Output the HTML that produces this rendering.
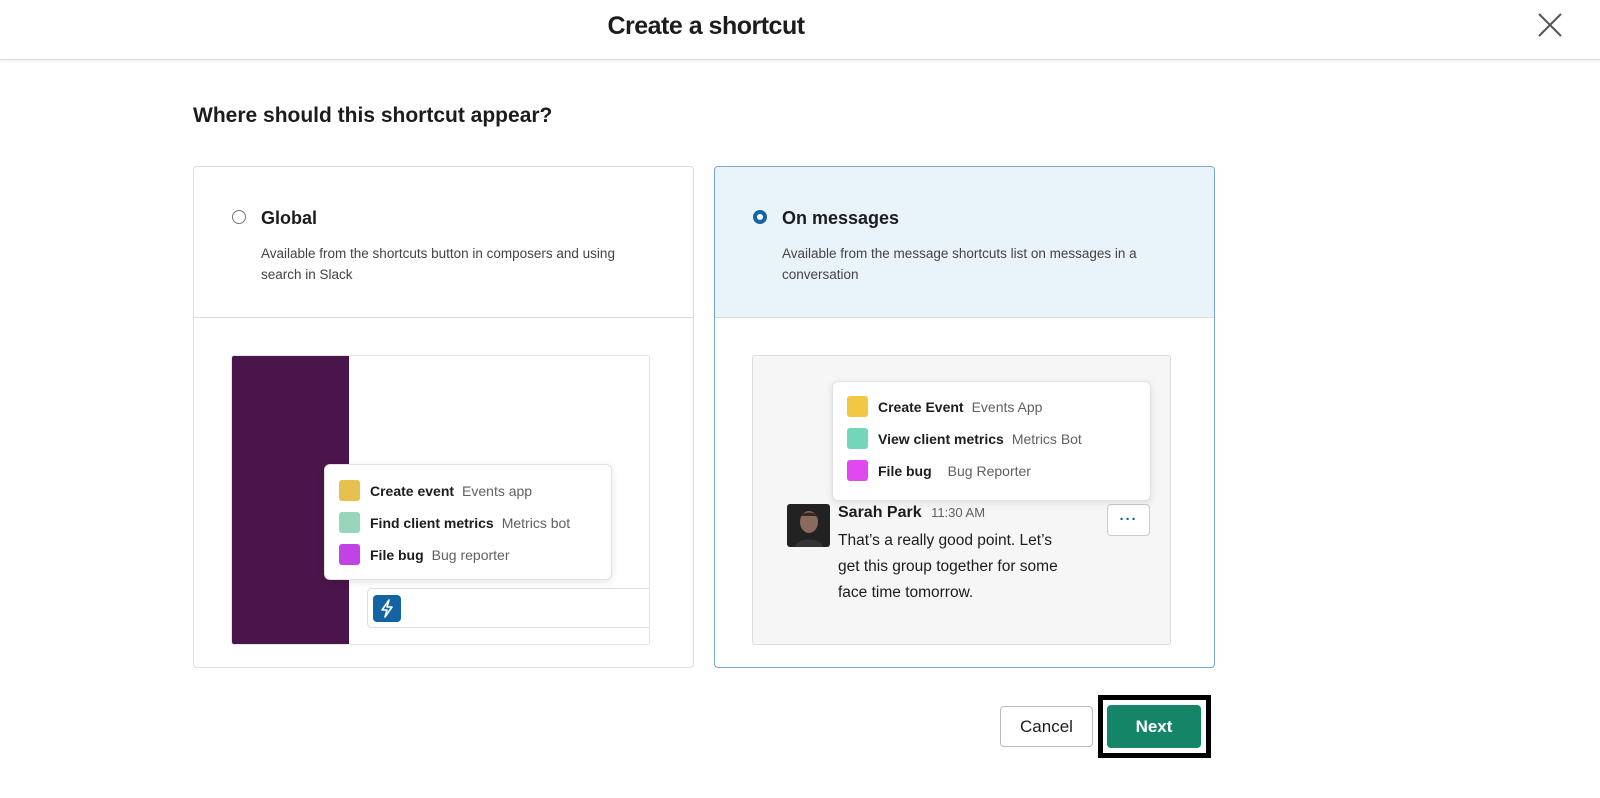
<!DOCTYPE html>
<html><head><meta charset="utf-8"><style>
*{box-sizing:border-box;margin:0;padding:0}
body{width:1600px;height:798px;background:#fff;font-family:"Liberation Sans",sans-serif;color:#1d1c1d;position:relative;overflow:hidden}
.hdr{position:absolute;left:0;top:0;width:1600px;height:60px;border-bottom:1px solid #ddd;box-shadow:0 1px 3px rgba(0,0,0,.08)}
.hdr h1{position:absolute;left:0;width:1412px;text-align:center;top:12px;font-size:25px;font-weight:bold;letter-spacing:-.5px}
.x{position:absolute;left:1537px;top:12px}
h2{position:absolute;left:193px;top:104px;font-size:21px;font-weight:bold}
.card{position:absolute;top:166px;width:501px;height:502px;border:1px solid #ddd;border-radius:4px;overflow:hidden}
.card .top{height:151px;border-bottom:1px solid #ddd;position:relative}
.radio{position:absolute;left:38px;top:43px;width:14px;height:14px;border-radius:50%;border:1px solid #777;background:#fff}
.card .t{position:absolute;left:67px;top:41px;font-size:18px;font-weight:bold}
.card .d{position:absolute;left:67px;top:76px;font-size:13.5px;line-height:21px;color:#454245;width:398px}
.menu{position:absolute;background:#fff;border:1px solid #e2e2e2;border-radius:6px;box-shadow:0 2px 8px rgba(0,0,0,.1)}
.row{position:absolute;left:14px;display:flex;align-items:center;font-size:14px}
.sq{width:21px;height:21px;border-radius:3px;margin-right:10px}
.row b{margin-right:8px}
.row span{color:#616061}
.btn{position:absolute;top:706px;height:41px;border-radius:4px;font-size:16px;font-weight:bold;display:flex;align-items:center;justify-content:center}
</style></head><body>
<div class="hdr"><h1>Create a shortcut</h1>
<svg class="x" width="26" height="26" viewBox="0 0 26 26"><path d="M2 2L24 24M24 2L2 24" stroke="#555" stroke-width="2"/></svg></div>
<h2>Where should this shortcut appear?</h2>

<div class="card" style="left:193px">
 <div class="top"><div class="radio"></div><div class="t">Global</div>
 <div class="d">Available from the shortcuts button in composers and using search in Slack</div></div>
 <div style="position:absolute;left:37px;top:188px;width:419px;height:290px;border:1px solid #e5e5e5;border-radius:3px;overflow:hidden">
  <div style="position:absolute;left:0;top:0;width:117px;height:290px;background:#4a154b"></div>
  <div style="position:absolute;left:135px;top:232px;width:290px;height:40px;border:1px solid #ddd;border-radius:5px;background:#fff"></div>
  <div style="position:absolute;left:141px;top:239px;width:28px;height:27px;background:#1264a3;border-radius:4px">
   <svg width="28" height="27" viewBox="0 0 28 27"><path d="M16 5L9 15h5l-2 7 7-10h-5l2-7z" fill="none" stroke="#fff" stroke-width="1.6" stroke-linejoin="round"/></svg></div>
 </div>
 <div class="menu" style="left:130px;top:297px;width:288px;height:116px">
  <div class="row" style="top:15px"><div class="sq" style="background:#e6c14f"></div><b>Create event</b><span>Events app</span></div>
  <div class="row" style="top:47px"><div class="sq" style="background:#98d5ba"></div><b>Find client metrics</b><span>Metrics bot</span></div>
  <div class="row" style="top:79px"><div class="sq" style="background:#c143e8"></div><b>File bug</b><span>Bug reporter</span></div>
 </div>
</div>

<div class="card" style="left:714px;border-color:#7aa6cf">
 <div class="top" style="background:#e8f4fa"><div class="radio" style="border:4px solid #1264a3"></div><div class="t">On messages</div>
 <div class="d">Available from the message shortcuts list on messages in a conversation</div></div>
 <div style="position:absolute;left:37px;top:188px;width:419px;height:290px;border:1px solid #ddd;border-radius:3px;background:#f6f6f6">
  <div style="position:absolute;left:34px;top:148px;width:43px;height:43px;background:#222;border-radius:3px;overflow:hidden">
   <svg width="43" height="43"><ellipse cx="22" cy="18" rx="9" ry="11" fill="#8a6a5a"/><path d="M8 43c2-10 26-10 28 0z" fill="#333"/><path d="M12 16c0-10 20-10 20 0l-3-4H14z" fill="#3a2820"/></svg></div>
  <div style="position:absolute;left:85px;top:148px;font-size:16px"><b>Sarah Park</b> <span style="font-size:13px;color:#616061;margin-left:5px">11:30 AM</span></div>
  <div style="position:absolute;left:85px;top:172px;font-size:15.5px;line-height:26px;width:236px">That’s a really good point. Let’s get this group together for some face time tomorrow.</div>
  <div style="position:absolute;left:354px;top:148px;width:43px;height:32px;background:#fff;border:1px solid #ccc;border-radius:4px;text-align:center;color:#1264a3;font-weight:bold;font-size:15px;line-height:30px;letter-spacing:1px">···</div>
 </div>
 <div class="menu" style="left:117px;top:214px;width:319px;height:120px">
  <div class="row" style="top:14px"><div class="sq" style="background:#f2c744"></div><b>Create Event</b><span>Events App</span></div>
  <div class="row" style="top:46px"><div class="sq" style="background:#74d6b8"></div><b>View client metrics</b><span>Metrics Bot</span></div>
  <div class="row" style="top:78px"><div class="sq" style="background:#e049f0"></div><b>File bug</b><span style="margin-left:8px">Bug Reporter</span></div>
 </div>
</div>

<div class="btn" style="left:1000px;width:93px;border:1px solid #bbb;font-weight:normal;font-size:17px">Cancel</div>
<div style="position:absolute;left:1098px;top:695px;width:113px;height:63px;border:5px solid #000"></div>
<div class="btn" style="left:1107px;top:705px;width:94px;height:43px;background:#148567;color:#fff;font-size:17px">Next</div>
</body></html>
